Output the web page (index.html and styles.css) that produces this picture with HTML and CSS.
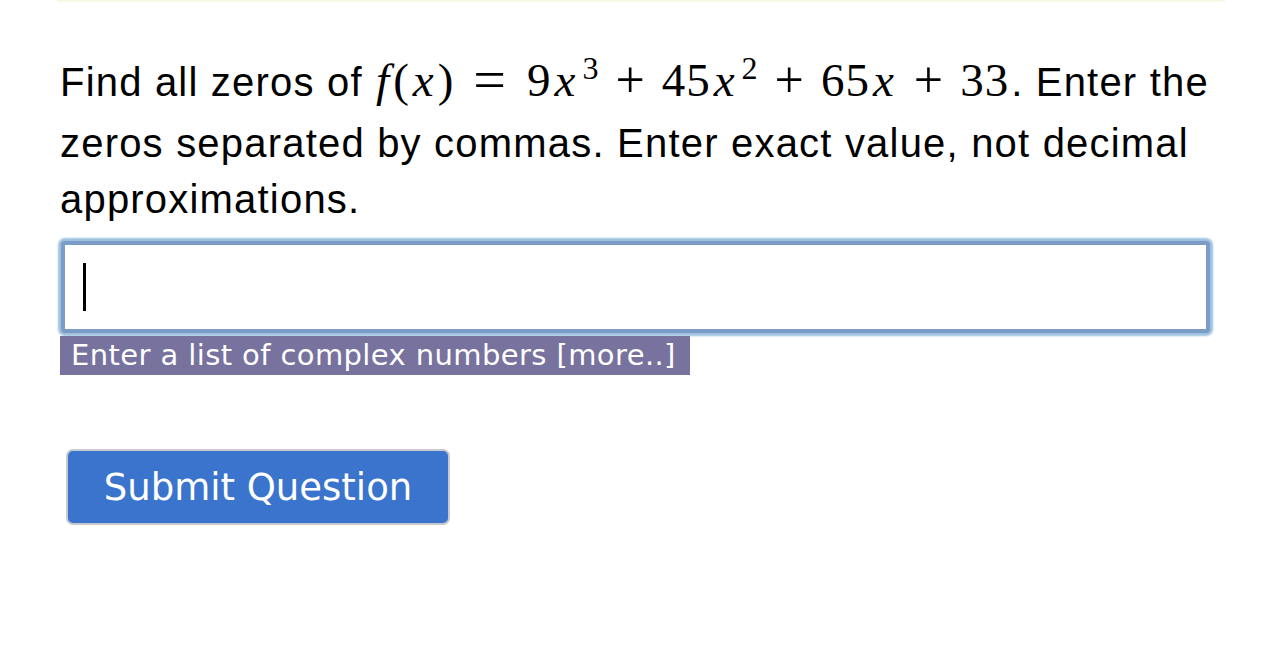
FILE: index.html
```html
<!DOCTYPE html>
<html lang="en">
<head>
    <meta charset="UTF-8">
    <meta name="viewport" content="width=device-width, initial-scale=1.0">
    <title>Question</title>
    <link rel="stylesheet" href="styles.css">
</head>
<body>
    <div class="question-wrap">
        <div class="question">
            <p class="prompt">Find all zeros of <span class="math"><i>f</i>(<i>x</i>)<span class="rel">=</span>9<i>x</i><sup>3</sup><span class="bin">+</span>45<i>x</i><sup>2</sup><span class="bin">+</span>65<i>x</i><span class="bin">+</span>33</span>. Enter the zeros separated by commas. Enter exact value, not decimal approximations.</p>

            <div class="answer">
                <div class="answer-box">
                    <span class="caret"></span>
                </div>
                <div class="hint">Enter a list of complex numbers [more..]</div>
            </div>

            <button class="submit">Submit Question</button>
        </div>
    </div>
</body>
</html>
```

FILE: styles.css
```css
/* Estilo geral */
body {
    margin: 0;
    padding: 0;
    background-color: #fff;
    color: #000;
    font-family: 'Liberation Sans', Arial, sans-serif;
}

.question-wrap {
    margin: 0 58px 0 57px;
    border-top: 2px solid #f6f8e4;
}

.question {
    padding: 43px 0 0 3px;
}

.prompt {
    margin: 0;
    font-size: 40px;
    line-height: 56px;
    letter-spacing: 1.2px;
}

.math {
    font-family: 'Liberation Serif', serif;
    font-size: 47px;
    line-height: 70px;
    letter-spacing: 1px;
    margin-left: -2px;
    margin-right: 2px;
    white-space: nowrap;
}

.math i {
    font-style: italic;
    padding: 0 3px;
}

.math sup {
    font-size: 32px;
    line-height: 0;
    margin-left: 3px;
}

.math .rel {
    font-size: 58px;
    line-height: 0;
    vertical-align: -3px;
    margin: 0 20px 0 19px;
}

.math .bin {
    font-size: 52px;
    line-height: 0;
    vertical-align: -1px;
    margin: 0 16px;
}

.answer {
    margin-top: 14px;
}

.answer-box {
    height: 84px;
    margin-left: 1px;
    margin-right: 15px;
    border: 4px solid #7b9dc5;
    border-radius: 4px;
    box-shadow: 0 0 2px 3px #9dc0e0;
    background-color: #fff;
    display: flex;
    align-items: center;
    padding-left: 18px;
}

.caret {
    display: block;
    width: 3px;
    height: 48px;
    background-color: #000;
}

.hint {
    display: inline-block;
    margin-top: 3px;
    background-color: #77729e;
    color: #fff;
    font-family: 'DejaVu Sans', sans-serif;
    font-size: 29px;
    line-height: 39px;
    letter-spacing: 0.4px;
    padding: 0 14px 0 11px;
}

.submit {
    display: block;
    margin: 74px 0 0 6px;
    width: 384px;
    height: 76px;
    padding: 0;
    background-color: #3b74cd;
    color: #fff;
    border: 2px solid #c6c9d0;
    border-radius: 7px;
    font-family: 'DejaVu Sans', sans-serif;
    font-size: 37px;
    cursor: pointer;
}
```
